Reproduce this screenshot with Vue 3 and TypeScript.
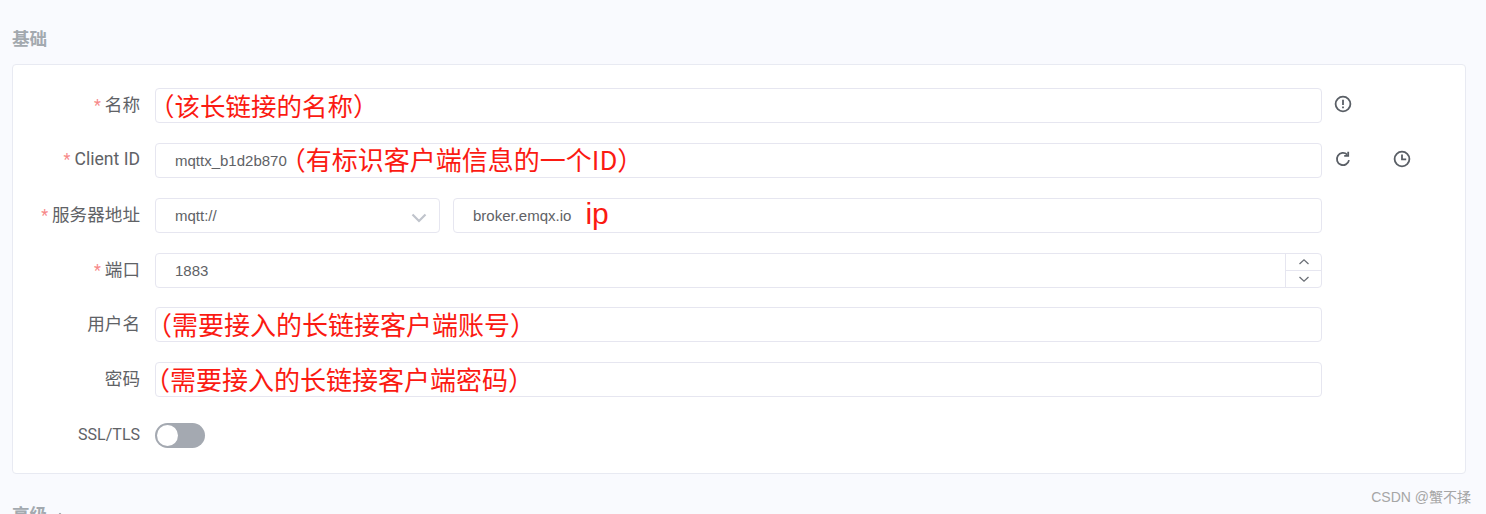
<script setup lang="ts">
interface Field {
  label: string;
  required: boolean;
  value?: string;
  note?: string;
}

const nameField: Field = { label: '名称', required: true, note: '（该长链接的名称）' };
const clientField: Field = { label: 'Client ID', required: true, value: 'mqttx_b1d2b870', note: '（有标识客户端信息的一个ID）' };
const userField: Field = { label: '用户名', required: false, note: '（需要接入的长链接客户端账号）' };
const passField: Field = { label: '密码', required: false, note: '（需要接入的长链接客户端密码）' };
</script>

<template>
  <div class="page">
    <h2 class="section-title">基础</h2>
    <div class="card">
      <div class="row">
        <label class="label"><i class="star">*</i>{{ nameField.label }}</label>
        <div class="input wide"><span class="note first">{{ nameField.note }}</span></div>
        <div class="actions">
          <svg class="icon" viewBox="0 0 18 18">
            <circle cx="9" cy="9" r="7.4" />
            <path d="M9 4.8v5.2" stroke-width="1.8" />
            <path d="M9 11.6v1.6" stroke-width="1.8" />
          </svg>
        </div>
      </div>

      <div class="row">
        <label class="label latin"><i class="star">*</i>{{ clientField.label }}</label>
        <div class="input wide">
          <span class="value">{{ clientField.value }}</span>
          <span class="note client">{{ clientField.note }}</span>
        </div>
        <div class="actions">
          <svg class="icon" viewBox="0 0 18 18">
            <path d="M15 10.2A6.1 6.1 0 1 1 13.2 4.6" />
            <path d="M14.2 1.8v4H10.2" fill="none" />
          </svg>
          <svg class="icon" viewBox="0 0 18 18">
            <circle cx="9" cy="9" r="7.4" />
            <path d="M9 4.6V9.4h4.2" />
          </svg>
        </div>
      </div>

      <div class="row">
        <label class="label"><i class="star">*</i>服务器地址</label>
        <div class="address">
          <div class="input select">
            <span class="value">mqtt://</span>
            <svg class="chevron" viewBox="0 0 16 10"><path d="M1.5 1.5 8 8l6.5-6.5" /></svg>
          </div>
          <div class="input host">
            <span class="value">broker.emqx.io</span>
            <span class="note ip">ip</span>
          </div>
        </div>
      </div>

      <div class="row">
        <label class="label"><i class="star">*</i>端口</label>
        <div class="input wide port">
          <span class="value">1883</span>
          <div class="stepper">
            <span class="step">
              <svg viewBox="0 0 12 8"><path d="M1.5 6 6 1.8 10.5 6" /></svg>
            </span>
            <span class="step">
              <svg viewBox="0 0 12 8"><path d="M1.5 2 6 6.2 10.5 2" /></svg>
            </span>
          </div>
        </div>
      </div>

      <div class="row">
        <label class="label">{{ userField.label }}</label>
        <div class="input wide"><span class="note user">{{ userField.note }}</span></div>
      </div>

      <div class="row">
        <label class="label">{{ passField.label }}</label>
        <div class="input wide"><span class="note pass">{{ passField.note }}</span></div>
      </div>

      <div class="row">
        <label class="label ssl">SSL/TLS</label>
        <div class="switch"><span class="knob"></span></div>
      </div>
    </div>

    <h2 class="section-title advanced">
      高级
      <svg class="caret" viewBox="0 0 12 8"><path d="M1.5 6 6 1.8 10.5 6" /></svg>
    </h2>

    <div class="watermark">CSDN @蟹不揉</div>
  </div>
</template>

<style scoped>
.page {
  position: relative;
  height: 514px;
  overflow: hidden;
  box-sizing: border-box;
  padding: 28px 20px 0 12px;
  background: #f9fafe;
  font-family: "Liberation Sans", "Noto Sans CJK SC", sans-serif;
}

.section-title {
  margin: 0 0 14px;
  font-size: 17.6px;
  line-height: 22px;
  font-weight: 700;
  color: #a3a9af;
  font-family: Roboto, "Noto Sans CJK SC", sans-serif;
}

.section-title.advanced {
  margin-top: 30px;
  display: flex;
  align-items: center;
  gap: 8px;
}

.caret {
  width: 10px;
  height: 7px;
  fill: none;
  stroke: #8d9399;
  stroke-width: 1.6;
}

.card {
  height: 410px;
  box-sizing: border-box;
  padding: 23.2px 0 0;
  background: #fff;
  border: 1px solid #e8eaf2;
  border-radius: 4px;
  display: flex;
  flex-direction: column;
  gap: 19.8px;
}

.row {
  display: flex;
  align-items: center;
  height: 35px;
}

.label {
  width: 127px;
  flex-shrink: 0;
  margin-right: 15px;
  margin-top: -4px;
  text-align: right;
  font-size: 17.6px;
  color: #606266;
  font-family: Roboto, "Noto Sans CJK SC", sans-serif;
  white-space: nowrap;
}

.label.latin {
  margin-top: -2px;
}

.label.ssl {
  margin-top: 0;
  font-size: 16px;
}

.star {
  margin-right: 4px;
  font-style: normal;
  font-size: 16px;
  color: #f78989;
}

.input {
  box-sizing: border-box;
  height: 35px;
  display: flex;
  align-items: center;
  background: #fff;
  border: 1px solid #e6e6f0;
  border-radius: 4px;
  white-space: nowrap;
}

.wide {
  width: 1167px;
  flex-shrink: 0;
}

.value {
  padding-left: 19px;
  font-size: 15px;
  color: #606266;
}

.note {
  margin-top: -3px;
  font-size: 26px;
  line-height: 35px;
  color: #fb1a12;
  font-family: "Noto Sans CJK SC", sans-serif;
}

.note.first {
  margin-left: -7px;
  font-size: 25.5px;
}

.note.client {
  margin-left: -7px;
}

.note.user {
  margin-left: -10px;
}

.note.pass {
  margin-left: -12px;
}

.note.ip {
  margin-left: 14px;
  margin-top: -4px;
  font-size: 30px;
  font-family: "Liberation Sans", sans-serif;
}

.actions {
  display: flex;
  align-items: center;
  gap: 41px;
  margin-left: 12px;
  margin-top: -3px;
}

.icon {
  width: 18px;
  height: 18px;
  fill: none;
  stroke: #5a5f66;
  stroke-width: 1.8;
}

.address {
  width: 1167px;
  display: flex;
  gap: 13px;
}

.select {
  width: 285px;
  justify-content: space-between;
}

.chevron {
  width: 16px;
  height: 10px;
  margin-right: 12px;
  margin-top: 5px;
  fill: none;
  stroke: #c0c4cc;
  stroke-width: 2.2;
}

.host {
  flex: 1;
}

.port {
  justify-content: space-between;
  align-items: stretch;
}

.port .value {
  align-self: center;
}

.stepper {
  width: 35px;
  display: flex;
  flex-direction: column;
  border-left: 1px solid #e6e6f0;
}

.step {
  flex: 1;
  display: flex;
  align-items: center;
  justify-content: center;
}

.step + .step {
  border-top: 1px solid #e6e6f0;
}

.step svg {
  width: 12px;
  height: 8px;
  fill: none;
  stroke: #6b6f76;
  stroke-width: 1.3;
}

.switch {
  width: 50px;
  height: 25px;
  margin-top: 2px;
  border-radius: 13px;
  background: #a4a9b1;
  display: flex;
  align-items: center;
  padding-left: 2px;
  box-sizing: border-box;
}

.knob {
  width: 21px;
  height: 21px;
  border-radius: 50%;
  background: #fff;
}

.watermark {
  position: absolute;
  right: 15px;
  top: 488px;
  font-size: 14px;
  line-height: 18px;
  color: #a6a6a6;
  font-family: "Liberation Sans", "Noto Sans CJK SC", sans-serif;
}
</style>

<style>
html,
body {
  margin: 0;
  overflow: hidden;
}
</style>
